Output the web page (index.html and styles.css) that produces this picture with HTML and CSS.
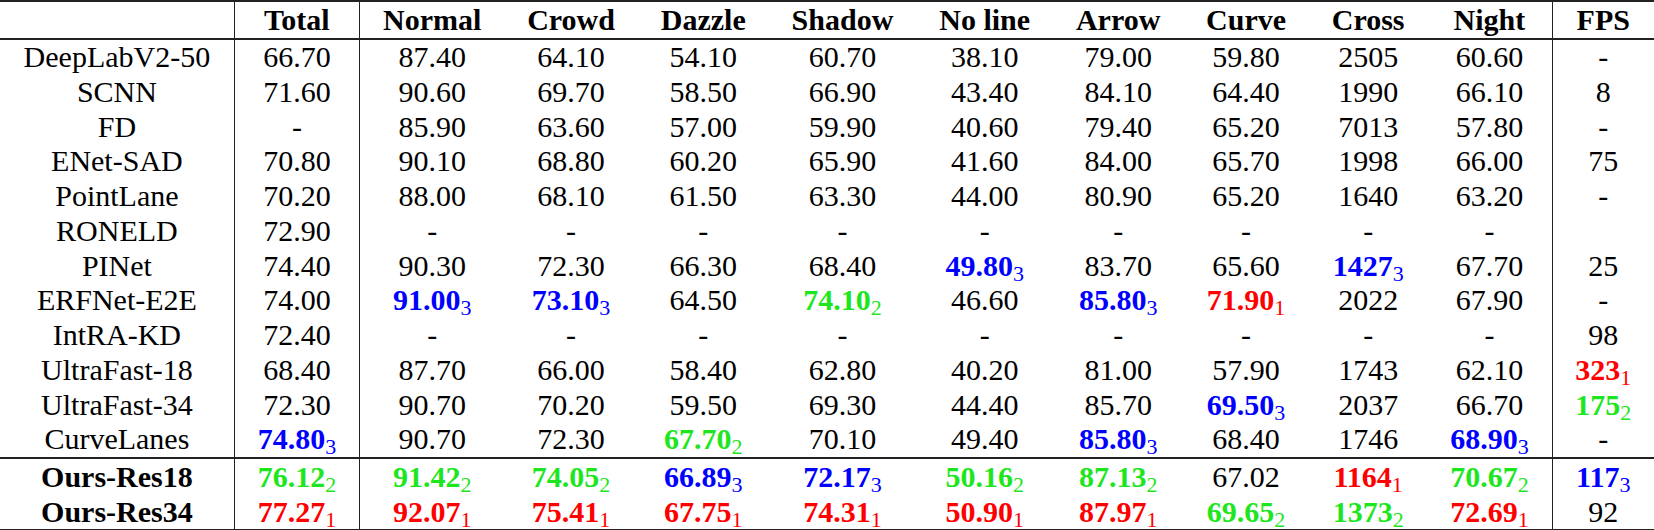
FILE: index.html
```html
<!DOCTYPE html>
<html lang="en">
<head>
    <meta charset="UTF-8">
    <meta name="viewport" content="width=device-width, initial-scale=1.0">
    <title>Lane Detection Results</title>
    <link rel="stylesheet" href="styles.css">
</head>
<body>
    <table class="results">
        <thead>
            <tr>
                <th class="name"></th>
                <th class="total">Total</th>
                <th>Normal</th>
                <th>Crowd</th>
                <th>Dazzle</th>
                <th>Shadow</th>
                <th>No line</th>
                <th>Arrow</th>
                <th>Curve</th>
                <th>Cross</th>
                <th>Night</th>
                <th class="fps">FPS</th>
            </tr>
        </thead>
        <tbody>
            <tr>
                <td class="name">DeepLabV2-50</td><td class="total">66.70</td>
                <td>87.40</td><td>64.10</td><td>54.10</td><td>60.70</td><td>38.10</td>
                <td>79.00</td><td>59.80</td><td>2505</td><td>60.60</td><td class="fps">-</td>
            </tr>
            <tr>
                <td class="name">SCNN</td><td class="total">71.60</td>
                <td>90.60</td><td>69.70</td><td>58.50</td><td>66.90</td><td>43.40</td>
                <td>84.10</td><td>64.40</td><td>1990</td><td>66.10</td><td class="fps">8</td>
            </tr>
            <tr>
                <td class="name">FD</td><td class="total">-</td>
                <td>85.90</td><td>63.60</td><td>57.00</td><td>59.90</td><td>40.60</td>
                <td>79.40</td><td>65.20</td><td>7013</td><td>57.80</td><td class="fps">-</td>
            </tr>
            <tr>
                <td class="name">ENet-SAD</td><td class="total">70.80</td>
                <td>90.10</td><td>68.80</td><td>60.20</td><td>65.90</td><td>41.60</td>
                <td>84.00</td><td>65.70</td><td>1998</td><td>66.00</td><td class="fps">75</td>
            </tr>
            <tr>
                <td class="name">PointLane</td><td class="total">70.20</td>
                <td>88.00</td><td>68.10</td><td>61.50</td><td>63.30</td><td>44.00</td>
                <td>80.90</td><td>65.20</td><td>1640</td><td>63.20</td><td class="fps">-</td>
            </tr>
            <tr>
                <td class="name">RONELD</td><td class="total">72.90</td>
                <td>-</td><td>-</td><td>-</td><td>-</td><td>-</td>
                <td>-</td><td>-</td><td>-</td><td>-</td><td class="fps"></td>
            </tr>
            <tr>
                <td class="name">PINet</td><td class="total">74.40</td>
                <td>90.30</td><td>72.30</td><td>66.30</td><td>68.40</td><td class="third">49.80<sub>3</sub></td>
                <td>83.70</td><td>65.60</td><td class="third">1427<sub>3</sub></td><td>67.70</td><td class="fps">25</td>
            </tr>
            <tr>
                <td class="name">ERFNet-E2E</td><td class="total">74.00</td>
                <td class="third">91.00<sub>3</sub></td><td class="third">73.10<sub>3</sub></td><td>64.50</td><td class="second">74.10<sub>2</sub></td><td>46.60</td>
                <td class="third">85.80<sub>3</sub></td><td class="first">71.90<sub>1</sub></td><td>2022</td><td>67.90</td><td class="fps">-</td>
            </tr>
            <tr>
                <td class="name">IntRA-KD</td><td class="total">72.40</td>
                <td>-</td><td>-</td><td>-</td><td>-</td><td>-</td>
                <td>-</td><td>-</td><td>-</td><td>-</td><td class="fps">98</td>
            </tr>
            <tr>
                <td class="name">UltraFast-18</td><td class="total">68.40</td>
                <td>87.70</td><td>66.00</td><td>58.40</td><td>62.80</td><td>40.20</td>
                <td>81.00</td><td>57.90</td><td>1743</td><td>62.10</td><td class="fps first">323<sub>1</sub></td>
            </tr>
            <tr>
                <td class="name">UltraFast-34</td><td class="total">72.30</td>
                <td>90.70</td><td>70.20</td><td>59.50</td><td>69.30</td><td>44.40</td>
                <td>85.70</td><td class="third">69.50<sub>3</sub></td><td>2037</td><td>66.70</td><td class="fps second">175<sub>2</sub></td>
            </tr>
            <tr>
                <td class="name">CurveLanes</td><td class="total third">74.80<sub>3</sub></td>
                <td>90.70</td><td>72.30</td><td class="second">67.70<sub>2</sub></td><td>70.10</td><td>49.40</td>
                <td class="third">85.80<sub>3</sub></td><td>68.40</td><td>1746</td><td class="third">68.90<sub>3</sub></td><td class="fps">-</td>
            </tr>
        </tbody>
        <tbody class="ours">
            <tr>
                <td class="name">Ours-Res18</td><td class="total second">76.12<sub>2</sub></td>
                <td class="second">91.42<sub>2</sub></td><td class="second">74.05<sub>2</sub></td><td class="third">66.89<sub>3</sub></td><td class="third">72.17<sub>3</sub></td><td class="second">50.16<sub>2</sub></td>
                <td class="second">87.13<sub>2</sub></td><td>67.02</td><td class="first">1164<sub>1</sub></td><td class="second">70.67<sub>2</sub></td><td class="fps third">117<sub>3</sub></td>
            </tr>
            <tr>
                <td class="name">Ours-Res34</td><td class="total first">77.27<sub>1</sub></td>
                <td class="first">92.07<sub>1</sub></td><td class="first">75.41<sub>1</sub></td><td class="first">67.75<sub>1</sub></td><td class="first">74.31<sub>1</sub></td><td class="first">50.90<sub>1</sub></td>
                <td class="first">87.97<sub>1</sub></td><td class="second">69.65<sub>2</sub></td><td class="second">1373<sub>2</sub></td><td class="first">72.69<sub>1</sub></td><td class="fps">92</td>
            </tr>
        </tbody>
    </table>
</body>
</html>
```

FILE: styles.css
```css
body {
    margin: 0;
    background: #fff;
    color: #000;
}
.results {
    width: 1654px;
    border-collapse: collapse;
    font-family: "Liberation Serif", "Times New Roman", serif;
    font-size: 30px;
    border-top: 2px solid #222;
    border-bottom: 2px solid #222;
}
.results th,
.results td {
    padding: 0 22px;
    text-align: center;
    white-space: nowrap;
    line-height: 34.75px;
}
.results thead th {
    font-weight: bold;
    height: 36px;
    line-height: 36px;
    border-bottom: 2px solid #222;
}
.results .name {
    border-right: 1px solid #222;
}
.results .total {
    border-right: 1px solid #222;
}
.results .fps {
    border-left: 1px solid #222;
}
.ours tr:first-child td {
    border-top: 2px solid #222;
}
.ours td {
    line-height: 35px;
}
.ours .name {
    font-weight: bold;
}
.first, .second, .third {
    font-weight: bold;
}
.first {
    color: #ff0000;
}
.second {
    color: #1ee61e;
}
.third {
    color: #0000ff;
}
.results sub {
    font-size: 22px;
    font-weight: normal;
    line-height: 0;
    vertical-align: -5px;
}
```
